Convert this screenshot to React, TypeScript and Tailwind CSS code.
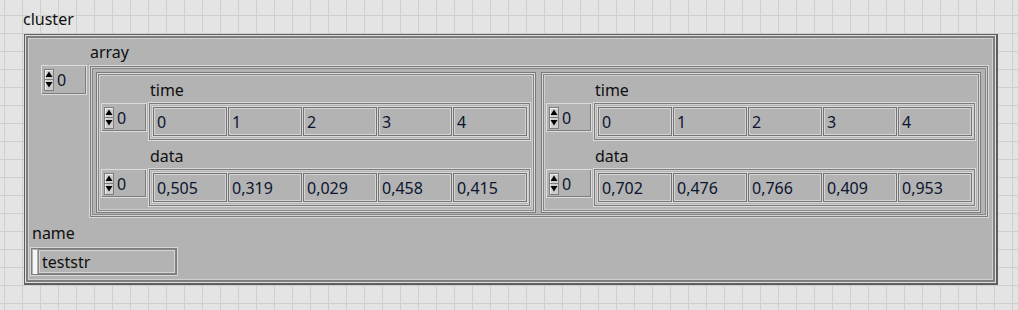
import React from 'react';

const elements = [
  { time: ['0', '1', '2', '3', '4'], data: ['0,505', '0,319', '0,029', '0,458', '0,415'] },
  { time: ['0', '1', '2', '3', '4'], data: ['0,702', '0,476', '0,766', '0,409', '0,953'] },
];

function Spin() {
  return (
    <div className="w-[10px] h-[22px] shrink-0 bg-[#cdcdcd] border border-[#7e7e7e] shadow-[inset_1px_1px_0_#efefef]">
      <svg width="8" height="20" viewBox="0 0 8 20" className="block">
        <path d="M4 1.5 L7.5 7 L0.5 7 Z" fill="#000" />
        <line x1="0" y1="9.5" x2="8" y2="9.5" stroke="#7e7e7e" />
        <path d="M0.5 12 L7.5 12 L4 17.5 Z" fill="#000" />
      </svg>
    </div>
  );
}

function IndexBox({ className }: { className: string }) {
  return (
    <div className={className}>
      <Spin />
      <span className="text-[#0c1530]">0</span>
    </div>
  );
}

function Cell({ value }: { value: string }) {
  return (
    <div className="w-[74px] h-[29px] flex items-center pl-[3px] border border-[#747474] shadow-[inset_0_0_0_1px_#d4d4d4,0_0_0_1px_#dadada] text-[#0c1530]">
      {value}
    </div>
  );
}

function NumArray({ values }: { values: string[] }) {
  return (
    <div className="w-[383px] h-[39px] pl-[4px] pt-[4px] flex gap-[1px] border border-[#dadada] shadow-[inset_0_0_0_1px_#7c7c7c,inset_0_0_0_2px_#cfcfcf]">
      {values.map((v, i) => (
        <Cell key={i} value={v} />
      ))}
    </div>
  );
}

function Element({ time, data }: { time: string[]; data: string[] }) {
  return (
    <div className="w-[440px] h-[141px] border border-[#7a7a7a] shadow-[inset_0_0_0_1px_#dcdcdc,inset_0_0_0_2px_#858585,inset_0_0_0_3px_#cfcfcf]">
      <div className="h-[29px] pt-[7px] pl-[53px]">time</div>
      <div className="flex items-start pl-[4px] gap-[1px]">
        <IndexBox className="w-[46px] h-[29px] mt-[1px] flex items-center pl-[2px] gap-[3px] border border-[#dcdcdc] shadow-[inset_-1px_-1px_0_#7e7e7e]" />
        <NumArray values={time} />
      </div>
      <div className="h-[27px] pt-[5px] pl-[53px]">data</div>
      <div className="flex items-start pl-[4px] gap-[1px]">
        <IndexBox className="w-[46px] h-[29px] mt-[1px] flex items-center pl-[2px] gap-[3px] border border-[#dcdcdc] shadow-[inset_-1px_-1px_0_#7e7e7e]" />
        <NumArray values={data} />
      </div>
    </div>
  );
}

export default function App() {
  return (
    <div className="w-[1018px] h-[310px] overflow-hidden bg-[#e4e4e4] bg-[linear-gradient(to_right,#cfcfcf_1px,transparent_1px),linear-gradient(to_bottom,#cfcfcf_1px,transparent_1px)] bg-[size:18px_18px] bg-[position:4px_15px] font-['Noto_Sans',sans-serif] text-[16px] leading-[20px] text-[#101010]">
      <div className="h-[34px] pt-[9px] pl-[23px]">cluster</div>
      <div className="ml-[24px] w-[974px] h-[251px] bg-[#b3b3b3] border border-[#5e5e5e] border-r-2 border-b-2 shadow-[inset_0_0_0_1px_#e0e0e0,inset_0_0_0_3px_#7e7e7e,inset_0_0_0_4px_#d0d0d0]">
        <div className="h-[30px] pt-[7px] pl-[65px]">array</div>
        <div className="flex items-start pl-[16px] gap-[2px]">
          <IndexBox className="w-[46px] h-[30px] flex items-center pl-[2px] gap-[3px] border border-[#dcdcdc] shadow-[inset_-1px_-1px_0_#7e7e7e]" />
          <div className="w-[900px] h-[153px] pl-[6px] pt-[6px] flex gap-[5px] border border-[#d8d8d8] shadow-[inset_0_0_0_1px_#7c7c7c,inset_0_0_0_2px_#d2d2d2,inset_0_0_0_3px_#868686]">
            {elements.map((e, i) => (
              <Element key={i} time={e.time} data={e.data} />
            ))}
          </div>
        </div>
        <div className="h-[29px] pt-[5px] pl-[7px]">name</div>
        <div className="ml-[5px] w-[148px] h-[29px] flex items-center border border-[#d8d8d8] shadow-[inset_0_0_0_1px_#7c7c7c]">
          <div className="ml-[2px] w-[4px] h-[24px] bg-[#f6f6f6]" />
          <div className="ml-[1px] flex-1 h-[25px] mr-[1px] flex items-center pl-[3px] border border-[#848484] shadow-[inset_0_0_0_1px_#d4d4d4]">teststr</div>
        </div>
      </div>
    </div>
  );
}
